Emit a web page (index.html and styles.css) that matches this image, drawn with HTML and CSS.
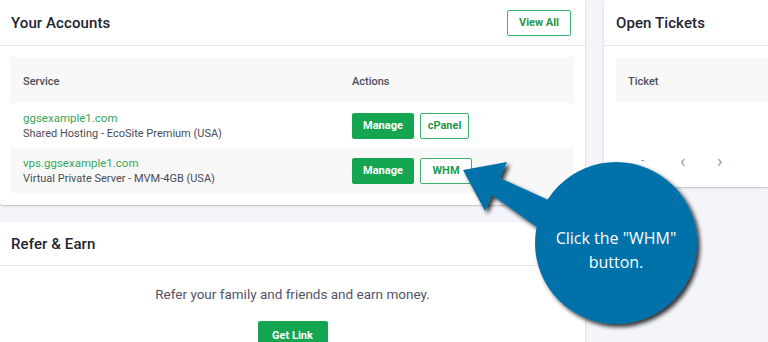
FILE: index.html
```html
<!DOCTYPE html>
<html>
<head>
<meta charset="utf-8">
<link rel="stylesheet" href="styles.css">
</head>
<body>
<div class="page">
  <div class="col-left">
    <section class="card accounts">
      <header class="card-head">
        <h2>Your Accounts</h2>
        <a class="btn btn-outline">View All</a>
      </header>
      <div class="table">
        <div class="row thead">
          <div class="c-service">Service</div>
          <div class="c-actions">Actions</div>
        </div>
        <div class="row">
          <div class="c-service">
            <div class="domain">ggsexample1.com</div>
            <div class="plan">Shared Hosting - EcoSite Premium (USA)</div>
          </div>
          <div class="c-actions">
            <a class="btn btn-solid">Manage</a>
            <a class="btn btn-outline">cPanel</a>
          </div>
        </div>
        <div class="row alt">
          <div class="c-service">
            <div class="domain">vps.ggsexample1.com</div>
            <div class="plan">Virtual Private Server - MVM-4GB (USA)</div>
          </div>
          <div class="c-actions">
            <a class="btn btn-solid">Manage</a>
            <a class="btn btn-outline whm">WHM</a>
          </div>
        </div>
      </div>
    </section>
    <section class="card refer">
      <header class="card-head">
        <h2>Refer &amp; Earn</h2>
      </header>
      <div class="refer-body">
        <p>Refer your family and friends and earn money.</p>
        <a class="btn btn-solid getlink">Get Link</a>
      </div>
    </section>
  </div>
  <div class="col-right">
    <section class="card tickets">
      <header class="card-head">
        <h2>Open Tickets</h2>
      </header>
      <div class="table">
        <div class="row thead">
          <div class="c-ticket">Ticket</div>
        </div>
      </div>
      <div class="pager">
        <span class="dash">-</span>
        <span class="chev">&#8249;</span>
        <span class="chev">&#8250;</span>
      </div>
    </section>
  </div>
</div>
<div class="callout">
  <svg width="768" height="342" viewBox="0 0 768 342">
    <defs>
      <filter id="sh" x="-20%" y="-20%" width="140%" height="140%">
        <feGaussianBlur in="SourceAlpha" stdDeviation="2"/>
        <feOffset dx="3" dy="3" result="b"/>
        <feComponentTransfer><feFuncA type="linear" slope="0.8"/></feComponentTransfer>
        <feMerge><feMergeNode/><feMergeNode in="SourceGraphic"/></feMerge>
      </filter>
    </defs>
    <g filter="url(#sh)" fill="#0572a9">
      <polygon points="463,170 507,162 500,178 566,208 552,238 492,195 485,211"/>
      <circle cx="616" cy="243" r="81"/>
    </g>
  </svg>
  <div class="callout-text">Click the "WHM"<br>button.</div>
</div>
</body>
</html>
```
FILE: styles.css
```css
* { box-sizing: border-box; }
html, body { margin: 0; padding: 0; }
body {
  background: #f4f5fa;
  font-family: Roboto, "Liberation Sans", Arial, sans-serif;
  color: #333;
  width: 768px;
  height: 342px;
  overflow: hidden;
  position: relative;
}
.page {
  display: grid;
  grid-template-columns: 585px 1fr;
  column-gap: 19px;
  height: 342px;
  overflow: hidden;
}
.col-left {
  display: flex;
  flex-direction: column;
  gap: 17px;
}
.card {
  background: #fff;
  box-shadow: 0 1px 2px rgba(0,0,0,0.22);
  border-radius: 0 0 3px 3px;
}
.card-head {
  height: 45px;
  display: flex;
  align-items: center;
  justify-content: space-between;
  padding: 0 14px 0 11px;
  border-bottom: 1px solid #e8e8ec;
}
.card-head h2 {
  margin: 0;
  font-size: 15px;
  font-weight: 500;
  color: #232330;
  letter-spacing: 0.1px;
}
.accounts { height: 205px; }
.accounts .card-head { height: 46px; }
.table {
  padding: 11px 11px 0 10px;
}
.row {
  display: flex;
  align-items: center;
  height: 45px;
  font-size: 11px;
}
.row.thead {
  background: #f8f8f8;
  height: 46px;
  color: #4d4f5c;
  font-weight: 500;
  padding-top: 2px;
}
.row.alt { background: #f8f8f8; }
.c-service { width: 342px; padding-left: 13px; }
.c-actions { display: flex; gap: 6px; }
.domain { color: #36a659; font-size: 11.5px; line-height: 15px; }
.plan { color: #494b57; font-size: 11px; line-height: 15px; }
.btn {
  display: inline-flex;
  align-items: center;
  justify-content: center;
  height: 26px;
  font-size: 11px;
  font-weight: 700;
  text-decoration: none;
  border-radius: 2px;
}
.btn-solid {
  background: #13a550;
  color: #fff;
  width: 62px;
}
.btn-outline {
  background: #fff;
  border: 1px solid #3cb66b;
  color: #1d9a4d;
  width: 49px;
}
.card-head .btn-outline { width: 64px; height: 26px; }
.whm { width: 52px; }
.refer { height: 140px; flex: none; }
.refer .card-head { height: 44px; }
.refer-body {
  display: flex;
  flex-direction: column;
  align-items: center;
  padding-top: 20px;
}
.refer-body p {
  margin: 0;
  font-size: 13.5px;
  color: #535467;
  line-height: 17px;
}
.getlink { margin-top: 18px; width: 70px; height: 28px; }
.tickets { height: 187px; border-radius: 0 0 0 3px; }
.tickets .card-head { padding-left: 12px; height: 46px; }
.tickets .table { padding: 11px 0 0 12px; }
.c-ticket { padding-left: 12px; }
.pager {
  display: flex;
  align-items: center;
  height: 40px;
  margin-top: 37px;
  padding-left: 37px;
  color: #9a9ba8;
  font-size: 15px;
}
.pager .dash { width: 39px; font-size: 12px; }
.pager .chev { width: 37px; font-size: 18px; }
.callout {
  position: absolute;
  left: 0;
  top: 0;
  width: 768px;
  height: 342px;
  pointer-events: none;
}
.callout svg { display: block; }
.callout-text {
  position: absolute;
  left: 536px;
  top: 226px;
  width: 160px;
  text-align: center;
  color: #fff;
  font-family: "Open Sans", "DejaVu Sans", sans-serif;
  font-size: 16px;
  line-height: 24px;
}
```
